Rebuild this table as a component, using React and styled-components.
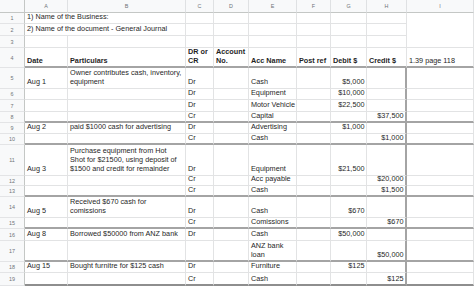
import React from "react";
import styled, { createGlobalStyle } from "styled-components";

const Global = createGlobalStyle`
  html, body { margin: 0; padding: 0; background: #ffffff; }
  body { font-family: "Liberation Sans", Arial, sans-serif; }
`;

const COLS = ["A", "B", "C", "D", "E", "F", "G", "H", "I"];
const WIDTHS = [25, 43, 118, 28, 35, 48, 34, 36, 40, 67];

const ROWS = [
  { n: 1, h: 11, cells: { A: { t: "1) Name of the Business:", span: 2 }, I: { t: "", rowSpan: 3 } } },
  { n: 2, h: 12, cells: { A: { t: "2) Name of the document - General Journal", span: 2 } } },
  { n: 3, h: 12, cells: {} },
  {
    n: 4, h: 20, thick: true, header: true,
    cells: {
      A: { t: "Date" }, B: { t: "Particulars" }, C: { t: "DR or\nCR" }, D: { t: "Account\nNo." },
      E: { t: "Acc Name" }, F: { t: "Post ref" }, G: { t: "Debit $" }, H: { t: "Credit $" },
      I: { t: "1.39 page 118", plain: true },
    },
  },
  { n: 5, h: 21, cells: { A: { t: "Aug 1" }, B: { t: "Owner contributes cash, inventory,\nequipment" }, C: { t: "Dr" }, E: { t: "Cash" }, G: { t: "$5,000" } } },
  { n: 6, h: 11, cells: { C: { t: "Dr" }, E: { t: "Equipment" }, G: { t: "$10,000" } } },
  { n: 7, h: 12, cells: { C: { t: "Dr" }, E: { t: "Motor Vehicle" }, G: { t: "$22,500" } } },
  { n: 8, h: 11, thick: true, cells: { C: { t: "Cr" }, E: { t: "Capital" }, H: { t: "$37,500" } } },
  { n: 9, h: 11, cells: { A: { t: "Aug 2" }, B: { t: "paid $1000 cash for advertising" }, C: { t: "Dr" }, E: { t: "Advertising" }, G: { t: "$1,000" } } },
  { n: 10, h: 11, thick: true, cells: { C: { t: "Cr" }, E: { t: "Cash" }, H: { t: "$1,000" } } },
  {
    n: 11, h: 31,
    cells: {
      A: { t: "Aug 3" },
      B: { t: "Purchase equipment from Hot\nShot for $21500, using deposit of\n$1500 and credit for remainder" },
      C: { t: "Dr" }, E: { t: "Equipment" }, G: { t: "$21,500" },
    },
  },
  { n: 12, h: 10, cells: { C: { t: "Cr" }, E: { t: "Acc payable" }, H: { t: "$20,000" } } },
  { n: 13, h: 11, thick: true, cells: { C: { t: "Cr" }, E: { t: "Cash" }, H: { t: "$1,500" } } },
  { n: 14, h: 21, cells: { A: { t: "Aug 5" }, B: { t: "Received $670 cash for\ncomissions" }, C: { t: "Dr" }, E: { t: "Cash" }, G: { t: "$670" } } },
  { n: 15, h: 11, thick: true, cells: { C: { t: "Cr" }, E: { t: "Comissions" }, H: { t: "$670" } } },
  { n: 16, h: 12, cells: { A: { t: "Aug 8" }, B: { t: "Borrowed $50000 from ANZ bank" }, C: { t: "Dr" }, E: { t: "Cash" }, G: { t: "$50,000" } } },
  { n: 17, h: 21, thick: true, cells: { E: { t: "ANZ bank\nloan" }, H: { t: "$50,000" } } },
  { n: 18, h: 11, cells: { A: { t: "Aug 15" }, B: { t: "Bought furnitre for $125 cash" }, C: { t: "Dr" }, E: { t: "Furniture" }, G: { t: "$125" } } },
  { n: 19, h: 13, thick: true, last: true, cells: { C: { t: "Cr" }, E: { t: "Cash" }, H: { t: "$125" } } },
];

const Sheet = styled.div`
  display: grid;
  grid-template-columns: ${WIDTHS.map((w) => `${w}px`).join(" ")};
  grid-template-rows: 13px ${ROWS.map((r) => `${r.h}px`).join(" ")};
  width: 474px;
  overflow: hidden;
  font-family: "Liberation Sans", Arial, sans-serif;
`;

const Corner = styled.div`
  box-sizing: border-box;
  background: #f8f9fa;
  border-right: 1px solid #c4c7c5;
  border-bottom: 1px solid #c4c7c5;
`;

const ColHead = styled.div`
  box-sizing: border-box;
  background: #f8f9fa;
  border-right: 1px solid #dfe1e3;
  border-bottom: 1px solid #c4c7c5;
  display: flex;
  align-items: center;
  justify-content: center;
  font-size: 5.4px;
  color: #6f7377;
`;

const RowNum = styled.div`
  box-sizing: border-box;
  background: #f8f9fa;
  border-right: 1px solid #c4c7c5;
  border-bottom: 1px solid #e3e4e6;
  display: flex;
  align-items: center;
  justify-content: center;
  font-size: 5.4px;
  color: #6f7377;
`;

const Cell = styled.div`
  box-sizing: border-box;
  grid-column: span ${(p) => p.$span};
  grid-row: span ${(p) => p.$rowSpan};
  border-right: ${(p) => (p.$thickRight ? "2px solid #a4a4a4" : "1px solid #e2e3e4")};
  border-bottom: ${(p) =>
    p.$last ? "2px solid #8e8e8e" : p.$thick ? "2px solid #a4a4a4" : "1px solid #e2e3e4"};
  display: flex;
  align-items: flex-end;
  justify-content: ${(p) => (p.$right ? "flex-end" : "flex-start")};
  padding: 0 ${(p) => (p.$right ? "1.5px" : "2px")} ${(p) => (p.$thick ? "0" : "1px")} 2px;
  font-size: 7.27px;
  line-height: 8.9px;
  font-weight: ${(p) => (p.$bold ? 700 : 400)};
  color: #1f1f1f;
  white-space: pre;
  overflow: visible;
  min-width: 0;
`;

export default function App() {
  const skip = new Set();
  const items = [<Corner key="corner" />];
  COLS.forEach((c) => items.push(<ColHead key={`h${c}`}>{c}</ColHead>));

  ROWS.forEach((row) => {
    items.push(<RowNum key={`n${row.n}`}>{row.n}</RowNum>);
    let ci = 0;
    while (ci < COLS.length) {
      const col = COLS[ci];
      const key = `${col}${row.n}`;
      if (skip.has(key)) {
        ci += 1;
        continue;
      }
      const cell = row.cells[col] || { t: "" };
      const span = cell.span || 1;
      const rowSpan = cell.rowSpan || 1;
      for (let r = 1; r < rowSpan; r += 1) skip.add(`${col}${row.n + r}`);
      items.push(
        <Cell
          key={key}
          $span={span}
          $rowSpan={rowSpan}
          $right={!row.header && (col === "G" || col === "H")}
          $bold={row.header && !cell.plain}
          $thick={row.thick}
          $last={row.last}
          $thickRight={col === "H" && row.n >= 5}
        >
          {cell.t}
        </Cell>
      );
      ci += span;
    }
  });

  return (
    <>
      <Global />
      <Sheet>{items}</Sheet>
    </>
  );
}
